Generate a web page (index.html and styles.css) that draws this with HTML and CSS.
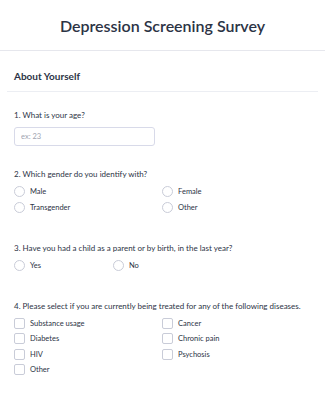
FILE: index.html
```html
<!DOCTYPE html>
<html lang="en">
<head>
<meta charset="UTF-8">
<title>Depression Screening Survey</title>
<link rel="stylesheet" href="styles.css">
</head>
<body>

<header class="form-header">
    <h1>Depression Screening Survey</h1>
</header>

<div class="form-body">
    <div class="section-title">About Yourself</div>

    <div class="question">
        <label class="q-label">1. What is your age?</label>
        <input type="text" class="text-input" placeholder="ex: 23">
    </div>

    <div class="question">
        <div class="q-label">2. Which gender do you identify with?</div>
        <div class="options two-col">
            <div class="option"><span class="radio"></span>Male</div>
            <div class="option"><span class="radio"></span>Female</div>
            <div class="option"><span class="radio"></span>Transgender</div>
            <div class="option"><span class="radio"></span>Other</div>
        </div>
    </div>

    <div class="question">
        <div class="q-label">3. Have you had a child as a parent or by birth, in the last year?</div>
        <div class="options yes-no">
            <div class="option"><span class="radio"></span>Yes</div>
            <div class="option"><span class="radio"></span>No</div>
        </div>
    </div>

    <div class="question">
        <div class="q-label">4. Please select if you are currently being treated for any of the following diseases.</div>
        <div class="options two-col">
            <div class="option"><span class="check"></span>Substance usage</div>
            <div class="option"><span class="check"></span>Cancer</div>
            <div class="option"><span class="check"></span>Diabetes</div>
            <div class="option"><span class="check"></span>Chronic pain</div>
            <div class="option"><span class="check"></span>HIV</div>
            <div class="option"><span class="check"></span>Psychosis</div>
            <div class="option"><span class="check"></span>Other</div>
        </div>
    </div>
</div>

</body>
</html>
```

FILE: styles.css
```css
body {
    margin: 0;
    font-family: Lato, 'Noto Sans', sans-serif;
    background: #fff;
    color: #2c3345;
    overflow: hidden;
}
.form-header {
    height: 50px;
    border-bottom: 1px solid #e6e7ed;
    display: flex;
    align-items: center;
    justify-content: center;
}
.form-header h1 {
    margin: 0;
    font-size: 16px;
    font-weight: 600;
    padding-top: 1px;
}
.form-body {
    padding: 0 7px;
}
.section-title {
    box-sizing: border-box;
    height: 41px;
    padding: 9px 0 0 7px;
    border-bottom: 1px solid #eceef3;
    display: flex;
    align-items: center;
    font-size: 10px;
    font-weight: 700;
}
.question {
    padding: 0 7px;
    margin-top: 23px;
}
.question:nth-child(2) {
    margin-top: 18px;
}
.q-label {
    display: block;
    font-size: 8px;
    line-height: 10px;
    margin-bottom: 7px;
}
.text-input {
    display: block;
    box-sizing: border-box;
    width: 141px;
    height: 19px;
    margin: 0;
    border: 1px solid #d8dae9;
    border-radius: 3px;
    padding: 0 6px;
    font-family: inherit;
    font-size: 7.5px;
    color: #2c3345;
}
.text-input::placeholder {
    color: #a0a4b0;
}
.options {
    display: grid;
    row-gap: 4.5px;
    padding-bottom: 7px;
    font-size: 7.5px;
}
.two-col {
    grid-template-columns: 148px 1fr;
}
.yes-no {
    grid-template-columns: 99px 1fr;
}
.option {
    display: flex;
    align-items: center;
    gap: 5px;
    height: 11px;
}
.radio, .check {
    box-sizing: border-box;
    width: 11px;
    height: 11px;
    border: 1px solid #c9ccd8;
    flex-shrink: 0;
}
.radio {
    border-radius: 50%;
}
.check {
    border-radius: 2px;
}
```
